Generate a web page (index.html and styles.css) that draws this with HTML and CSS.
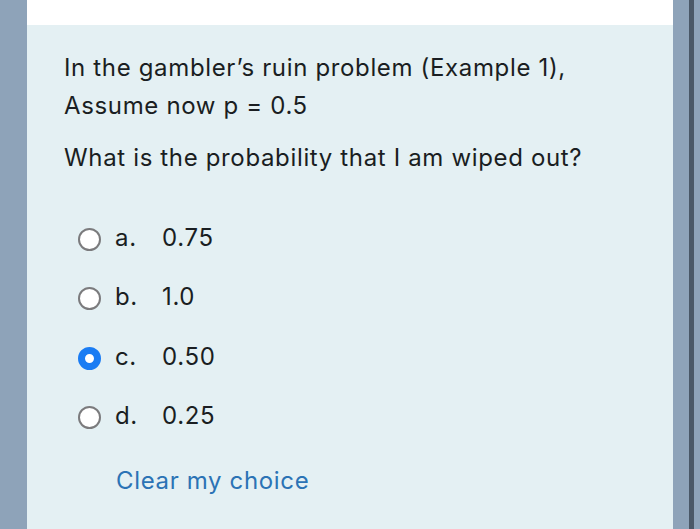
FILE: index.html
```html
<!DOCTYPE html>
<html>
<head>
<meta charset="utf-8">
<link rel="stylesheet" href="styles.css">
</head>
<body>
<div class="frame">
  <div class="side left"></div>
  <div class="main">
    <div class="top"></div>
    <div class="card">
      <p class="q">In the gambler’s ruin problem (Example 1),<br>Assume now p = 0.5</p>
      <p class="q q2">What is the probability that I am wiped out?</p>
      <div class="answers">
        <div class="opt"><span class="radio"></span><span class="let">a.</span><span class="val">0.75</span></div>
        <div class="opt"><span class="radio"></span><span class="let">b.</span><span class="val">1.0</span></div>
        <div class="opt"><span class="radio on"></span><span class="let">c.</span><span class="val">0.50</span></div>
        <div class="opt"><span class="radio"></span><span class="let">d.</span><span class="val">0.25</span></div>
      </div>
      <div class="clear">Clear my choice</div>
    </div>
  </div>
  <div class="side right"><div class="bar"></div></div>
</div>
</body>
</html>
```
FILE: styles.css
```css
html, body { margin: 0; padding: 0; }
body {
  width: 700px; height: 529px; overflow: hidden;
  font-family: Inter, "Noto Sans", "Liberation Sans", sans-serif;
  color: #1a1e22;
  letter-spacing: 0.65px;
}
.frame { display: flex; height: 529px; }
.side { background: #8ea3b9; }
.left { width: 27px; }
.right { width: 27px; display: flex; }
.right .bar { width: 5px; margin-left: 16px; background: #4a5867; }
.main { flex: 1; display: flex; flex-direction: column; }
.top { height: 25px; background: #ffffff; }
.card { flex: 1; background: #e4f0f3; padding: 24px 0 0 37px; }
.q { margin: 0; font-size: 24px; line-height: 38px; }
.q2 { margin-top: 14px; }
.answers { margin-top: 31px; padding-left: 51px; }
.opt { display: flex; align-items: center; height: 59.5px; font-size: 24px; line-height: 38px; }
.radio {
  width: 23px; height: 23px; box-sizing: border-box; border-radius: 50%;
  border: 2.5px solid #7b7b7d; background: #fff; margin: 3px 14px 0 -37px;
}
.radio.on { border: 7.5px solid #1a7cf3; }
.let { width: 47px; }
.clear { margin-top: 16px; padding-left: 52px; font-size: 24px; line-height: 38px; color: #2b73b5; }
```
